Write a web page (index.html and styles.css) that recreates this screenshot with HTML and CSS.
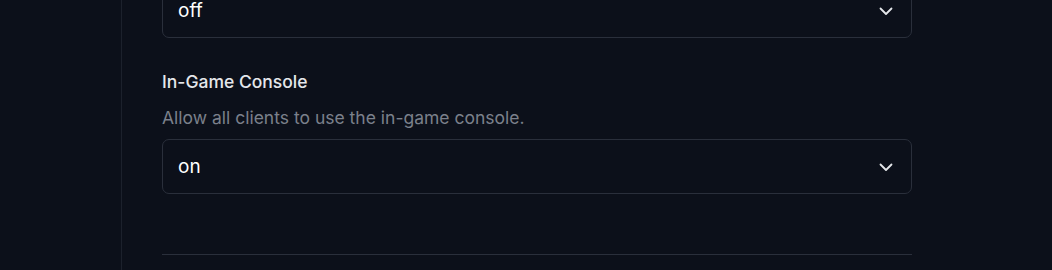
FILE: index.html
```html
<!DOCTYPE html>
<html>
<head>
<meta charset="utf-8">
<link rel="stylesheet" href="styles.css">
</head>
<body>
<div class="layout">
  <aside class="sidebar"></aside>
  <main class="content">
    <div class="select select-first">
      <span class="value">off</span>
      <svg class="chev" width="16" height="16" viewBox="0 0 16 16"><path d="M2.5 5.5 8 11l5.5-5.5" fill="none" stroke="#e5e7eb" stroke-width="1.8" stroke-linecap="round" stroke-linejoin="round"/></svg>
    </div>
    <div class="field">
      <div class="label">In-Game Console</div>
      <div class="desc">Allow all clients to use the in-game console.</div>
      <div class="select">
        <span class="value">on</span>
        <svg class="chev" width="16" height="16" viewBox="0 0 16 16"><path d="M2.5 5.5 8 11l5.5-5.5" fill="none" stroke="#e5e7eb" stroke-width="1.8" stroke-linecap="round" stroke-linejoin="round"/></svg>
      </div>
    </div>
    <div class="divider"></div>
  </main>
</div>
</body>
</html>
```
FILE: styles.css
```css
html, body {
  margin: 0;
  padding: 0;
  background: #0c101a;
  height: 100%;
  overflow: hidden;
  font-family: Inter, "Liberation Sans", sans-serif;
}
.layout {
  display: flex;
  height: 100%;
}
.sidebar {
  width: 121px;
  border-right: 1px solid #1c212c;
  flex-shrink: 0;
}
.content {
  padding-left: 40px;
  width: 750px;
  margin-top: -17px;
}
.select {
  box-sizing: border-box;
  height: 55px;
  border: 1px solid #2a2f3b;
  border-radius: 7px;
  display: flex;
  align-items: center;
  justify-content: space-between;
  padding: 0 17px 0 15px;
  color: #ffffff;
  font-size: 19px;
}
.field {
  margin-top: 32px;
}
.label {
  color: #e5e7eb;
  font-size: 17.5px;
  font-weight: 500;
  line-height: 24px;
}
.desc {
  color: #7b808b;
  font-size: 17.5px;
  line-height: 24px;
  margin-top: 12px;
  margin-bottom: 9px;
}
.chev {
  display: block;
}
.divider {
  margin-top: 60px;
  height: 1px;
  background: #2a2f3b;
}
```
